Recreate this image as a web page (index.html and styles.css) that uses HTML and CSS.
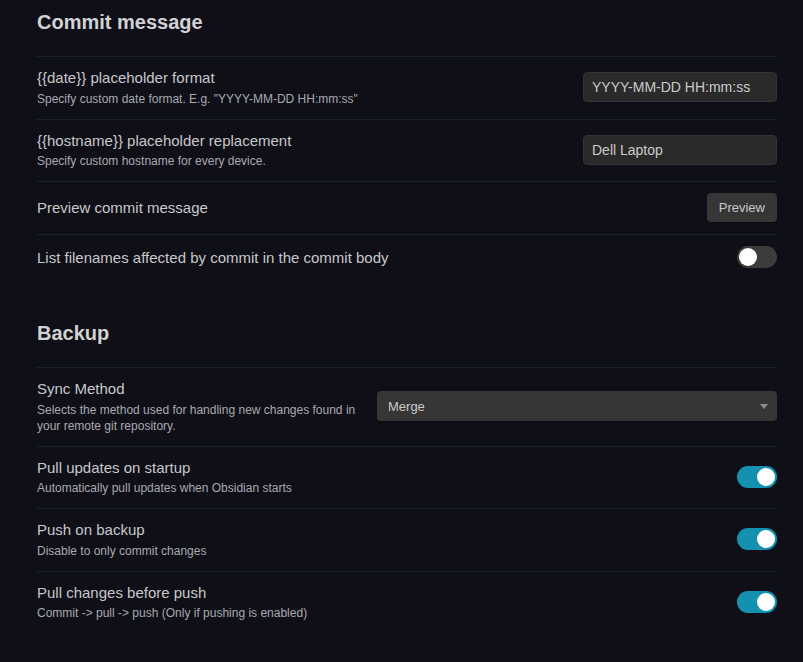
FILE: index.html
```html
<!DOCTYPE html>
<html lang="en">
<head>
<meta charset="utf-8">
<title>Settings</title>
<link rel="stylesheet" href="styles.css">
</head>
<body>
<div class="page">
  <section class="section">
    <h3 class="heading">Commit message</h3>
    <div class="item">
      <div class="info">
        <div class="name">{{date}} placeholder format</div>
        <div class="desc">Specify custom date format. E.g. "YYYY-MM-DD HH:mm:ss"</div>
      </div>
      <div class="control"><input class="text" type="text" value="YYYY-MM-DD HH:mm:ss"></div>
    </div>
    <div class="item">
      <div class="info">
        <div class="name">{{hostname}} placeholder replacement</div>
        <div class="desc">Specify custom hostname for every device.</div>
      </div>
      <div class="control"><input class="text" type="text" value="Dell Laptop"></div>
    </div>
    <div class="item">
      <div class="info">
        <div class="name">Preview commit message</div>
      </div>
      <div class="control"><button class="btn">Preview</button></div>
    </div>
    <div class="item">
      <div class="info">
        <div class="name">List filenames affected by commit in the commit body</div>
      </div>
      <div class="control"><div class="toggle"><div class="knob"></div></div></div>
    </div>
  </section>
  <section class="section">
    <h3 class="heading">Backup</h3>
    <div class="item">
      <div class="info">
        <div class="name">Sync Method</div>
        <div class="desc">Selects the method used for handling new changes found in your remote git repository.</div>
      </div>
      <div class="control">
        <div class="select"><span>Merge</span><svg class="caret" width="8" height="5" viewBox="0 0 8 5"><path d="M0 0H8L4 5Z" fill="#8e8e8e"/></svg></div>
      </div>
    </div>
    <div class="item">
      <div class="info">
        <div class="name">Pull updates on startup</div>
        <div class="desc">Automatically pull updates when Obsidian starts</div>
      </div>
      <div class="control"><div class="toggle on"><div class="knob"></div></div></div>
    </div>
    <div class="item">
      <div class="info">
        <div class="name">Push on backup</div>
        <div class="desc">Disable to only commit changes</div>
      </div>
      <div class="control"><div class="toggle on"><div class="knob"></div></div></div>
    </div>
    <div class="item">
      <div class="info">
        <div class="name">Pull changes before push</div>
        <div class="desc">Commit -&gt; pull -&gt; push (Only if pushing is enabled)</div>
      </div>
      <div class="control"><div class="toggle on"><div class="knob"></div></div></div>
    </div>
  </section>
</div>
</body>
</html>
```
FILE: styles.css
```css
html, body {
  margin: 0;
  padding: 0;
  background: #0f0f17;
  height: 100%;
}
body {
  font-family: "Liberation Sans", Arial, sans-serif;
  color: #c9c9cc;
}
.page {
  padding: 10px 26px 0 37px;
}
.section + .section {
  margin-top: 41px;
}
.heading {
  margin: 0 0 22px 0;
  font-size: 20px;
  line-height: 24px;
  font-weight: bold;
  color: #d2d2d4;
}
.item {
  display: flex;
  align-items: center;
  border-top: 1px solid #1c2128;
  padding: 11px 0 12px 0;
}
.info {
  flex: 1 1 auto;
  margin-right: 16px;
  min-width: 0;
}
.name {
  font-size: 15px;
  line-height: 19px;
  color: #c8c8cb;
}
.desc {
  font-size: 12px;
  line-height: 16px;
  padding-top: 3.5px;
  color: #a9a9b0;
}
.control {
  flex: 0 0 auto;
  display: flex;
  align-items: center;
}
.text {
  box-sizing: border-box;
  width: 194px;
  height: 30px;
  background: #2a2a2a;
  border: 1px solid #333336;
  border-radius: 4px;
  padding: 0 8px;
  font-family: "Liberation Sans", Arial, sans-serif;
  font-size: 14px;
  color: #cacaca;
  outline: none;
}
.btn {
  box-sizing: border-box;
  height: 29px;
  padding: 0 12px;
  background: #363636;
  border: none;
  border-radius: 4px;
  font-family: "Liberation Sans", Arial, sans-serif;
  font-size: 13px;
  color: #c9c9c9;
  box-shadow: 0 1px 1px rgba(0,0,0,0.3);
}
.select {
  box-sizing: border-box;
  width: 400px;
  height: 30px;
  background: #363636;
  border-radius: 4px;
  padding: 0 9px 0 11px;
  display: flex;
  align-items: center;
  justify-content: space-between;
  font-size: 13px;
  color: #c9c9c9;
  box-shadow: 0 1px 1px rgba(0,0,0,0.3);
}
.toggle {
  box-sizing: border-box;
  width: 40px;
  height: 22px;
  border-radius: 11px;
  background: #3c3c3c;
  padding: 2px;
  display: flex;
  justify-content: flex-start;
}
.toggle.on {
  background: #1490b0;
  justify-content: flex-end;
}
.knob {
  width: 18px;
  height: 18px;
  border-radius: 50%;
  background: #ffffff;
}
```
